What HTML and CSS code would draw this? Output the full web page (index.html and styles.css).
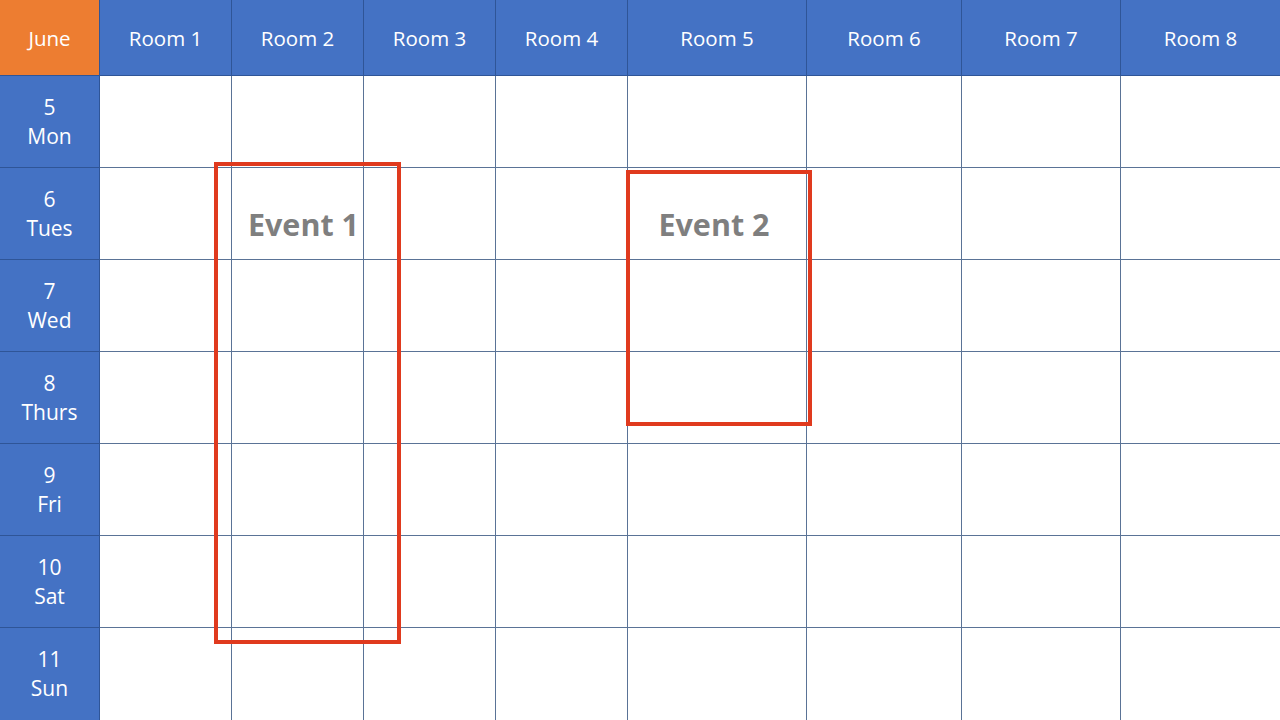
FILE: index.html
```html
<!DOCTYPE html>
<html>
<head>
<meta charset="utf-8">
<link rel="stylesheet" href="styles.css">
</head>
<body>
<div class="sheet">
  <div class="grid">
    <div class="cell head month">June</div>
    <div class="cell head">Room 1</div>
    <div class="cell head">Room 2</div>
    <div class="cell head">Room 3</div>
    <div class="cell head">Room 4</div>
    <div class="cell head">Room 5</div>
    <div class="cell head">Room 6</div>
    <div class="cell head">Room 7</div>
    <div class="cell head last">Room 8</div>

    <div class="cell day">5<br>Mon</div>
    <div class="cell"></div><div class="cell"></div><div class="cell"></div><div class="cell"></div><div class="cell"></div><div class="cell"></div><div class="cell"></div><div class="cell last"></div>

    <div class="cell day">6<br>Tues</div>
    <div class="cell"></div><div class="cell"></div><div class="cell"></div><div class="cell"></div><div class="cell"></div><div class="cell"></div><div class="cell"></div><div class="cell last"></div>

    <div class="cell day">7<br>Wed</div>
    <div class="cell"></div><div class="cell"></div><div class="cell"></div><div class="cell"></div><div class="cell"></div><div class="cell"></div><div class="cell"></div><div class="cell last"></div>

    <div class="cell day">8<br>Thurs</div>
    <div class="cell"></div><div class="cell"></div><div class="cell"></div><div class="cell"></div><div class="cell"></div><div class="cell"></div><div class="cell"></div><div class="cell last"></div>

    <div class="cell day">9<br>Fri</div>
    <div class="cell"></div><div class="cell"></div><div class="cell"></div><div class="cell"></div><div class="cell"></div><div class="cell"></div><div class="cell"></div><div class="cell last"></div>

    <div class="cell day">10<br>Sat</div>
    <div class="cell"></div><div class="cell"></div><div class="cell"></div><div class="cell"></div><div class="cell"></div><div class="cell"></div><div class="cell"></div><div class="cell last"></div>

    <div class="cell day bottom">11<br>Sun</div>
    <div class="cell bottom"></div><div class="cell bottom"></div><div class="cell bottom"></div><div class="cell bottom"></div><div class="cell bottom"></div><div class="cell bottom"></div><div class="cell bottom"></div><div class="cell bottom last"></div>
  </div>

  <div class="event event-1"><span class="event-title">Event 1</span></div>
  <div class="event event-2"><span class="event-title">Event 2</span></div>
</div>
</body>
</html>
```

FILE: styles.css
```css
html, body {
  margin: 0;
  padding: 0;
  background: #ffffff;
}

body {
  font-family: "Open Sans", "Noto Sans", sans-serif;
  width: 1280px;
  height: 720px;
  overflow: hidden;
}

.sheet {
  position: relative;
  width: 1280px;
  height: 720px;
}

.grid {
  display: grid;
  grid-template-columns: 100px 132px 132px 132px 132px 179px 155px 159px 159px;
  grid-template-rows: 76px repeat(7, 92px);
  width: 1280px;
  height: 720px;
}

.cell {
  box-sizing: border-box;
  border-right: 1px solid #5a7396;
  border-bottom: 1px solid #5a7396;
  background: #ffffff;
}

.cell.last {
  border-right: none;
}

.cell.bottom {
  border-bottom: none;
}

.head {
  background: #4472c4;
  color: #ffffff;
  font-size: 20.5px;
  display: flex;
  align-items: center;
  justify-content: center;
  border-right-color: #2f5597;
  border-bottom-color: #2f5597;
}

.month {
  background: #ed7d31;
}

.day {
  background: #4472c4;
  color: #ffffff;
  font-size: 21px;
  line-height: 29px;
  display: flex;
  align-items: center;
  justify-content: center;
  text-align: center;
  border-right-color: #2f5597;
  border-bottom-color: #2f5597;
}

.event {
  position: absolute;
  box-sizing: border-box;
  border: 4px solid #e03a1e;
  display: flex;
  justify-content: center;
  align-items: flex-start;
}

.event-1 {
  left: 214px;
  top: 162px;
  width: 187px;
  height: 482px;
  padding-top: 40px;
  padding-right: 8px;
}

.event-2 {
  left: 626px;
  top: 170px;
  width: 186px;
  height: 256px;
  padding-top: 32px;
  padding-right: 10px;
}

.event-title {
  font-family: "Open Sans", "Noto Sans", sans-serif;
  font-weight: 700;
  font-size: 30.5px;
  line-height: 36px;
  color: #7f7f7f;
}
```
